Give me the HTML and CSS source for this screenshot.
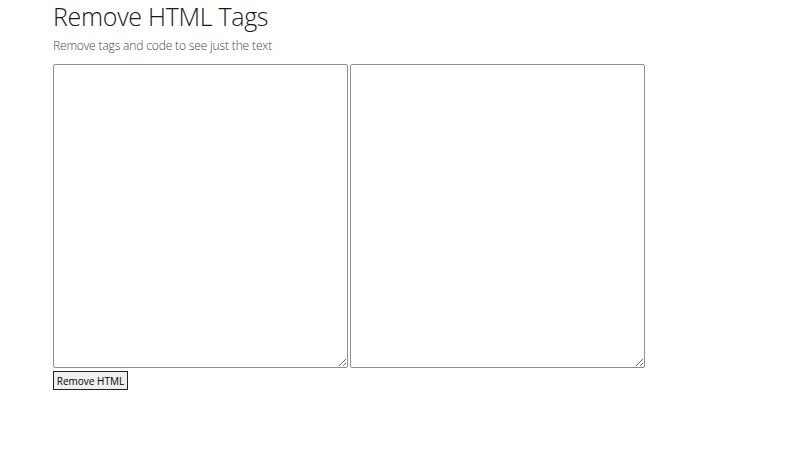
FILE: index.html
```html
<!DOCTYPE html>
<html>
<head>
<meta charset="utf-8">
<link rel="stylesheet" href="styles.css">
</head>
<body>
<div class="page">
  <h1 class="title">Remove HTML Tags</h1>
  <p class="subtitle">Remove tags and code to see just the text</p>
  <div class="boxes">
    <textarea class="box"></textarea>
    <textarea class="box"></textarea>
  </div>
  <button class="action">Remove HTML</button>
</div>
</body>
</html>
```
FILE: styles.css
```css
html, body {
  margin: 0;
  padding: 0;
  background: #ffffff;
}
.page {
  padding: 0 0 0 53px;
  font-family: "Open Sans", "Noto Sans", sans-serif;
  color: #222;
}
.title {
  margin: 0;
  padding-top: 0;
  font-size: 25px;
  font-weight: 300;
  line-height: 32px;
  letter-spacing: -0.3px;
  color: #1a1a1a;
}
.subtitle {
  margin: 6px 0 0 0;
  font-size: 12px;
  font-weight: 300;
  line-height: 16px;
  letter-spacing: -0.15px;
  color: #444;
}
.boxes {
  display: flex;
  gap: 2px;
  margin-top: 10px;
}
.box {
  box-sizing: border-box;
  width: 295px;
  height: 304px;
  margin: 0;
  border: 1px solid #8f8f8f;
  border-radius: 2px;
  background: #fff;
  resize: both;
}
.action {
  display: block;
  margin-top: 3px;
  box-sizing: border-box;
  width: 75px;
  height: 19px;
  padding: 0;
  font-family: "Open Sans", "Noto Sans", sans-serif;
  font-size: 10px;
  color: #000;
  background: #efefef;
  border: 1px solid #222;
  border-radius: 0;
}
```
